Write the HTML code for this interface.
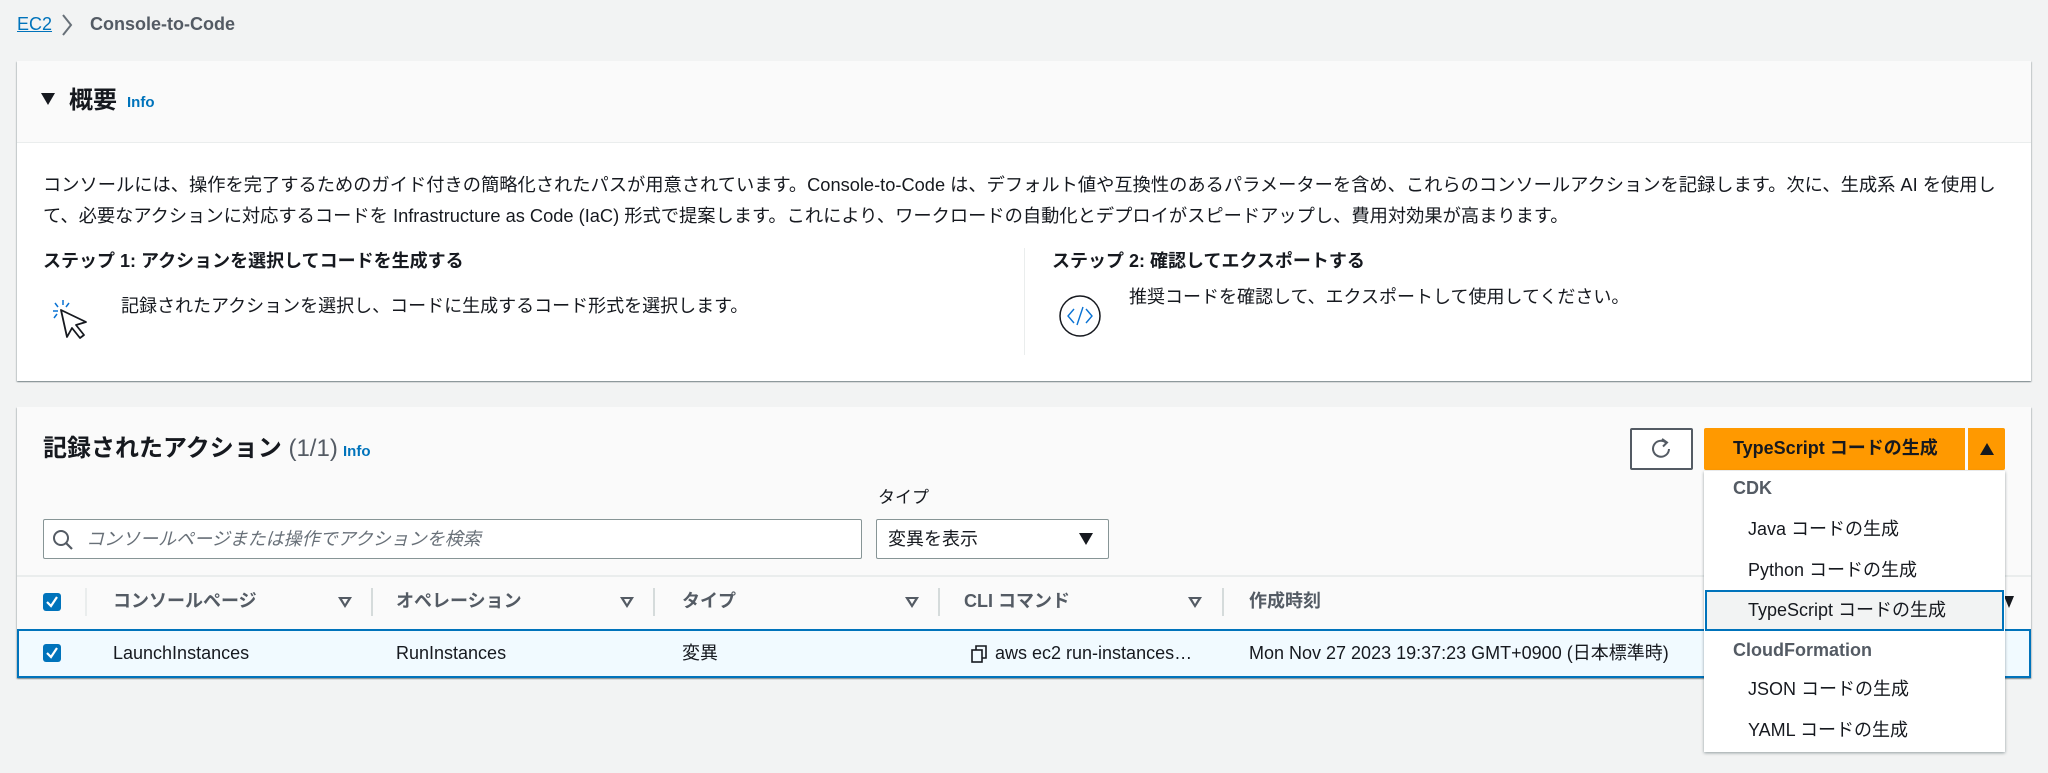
<!DOCTYPE html>
<html><head><meta charset="utf-8"><style>
*{box-sizing:border-box;margin:0;padding:0}
body{width:2048px;height:773px;background:#f2f3f3;font-family:"Liberation Sans","Noto Sans CJK JP",sans-serif;color:#16191f;position:relative;overflow:hidden;font-size:18px}
.a{position:absolute;white-space:nowrap;line-height:1.3}
.panel{position:absolute;background:#fff;box-shadow:0 1px 1px rgba(0,28,36,.3),1px 1px 1px rgba(0,28,36,.15),-1px 1px 1px rgba(0,28,36,.15)}
.info{color:#0073bb;font-weight:bold;font-size:15px}
.b{font-weight:bold}
.sort{position:absolute;width:0;height:0;border-left:7px solid transparent;border-right:7px solid transparent;border-top:11px solid #545b64}
.sort::after{content:"";position:absolute;left:-3px;top:-9px;border-left:3px solid transparent;border-right:3px solid transparent;border-top:5px solid #fafafa}
.sep{position:absolute;width:2px;height:28px;background:#d5dbdb;top:588px}
.cb{position:absolute;width:18px;height:18px;background:#0073bb;border-radius:3px}
.cb svg{position:absolute;left:2px;top:2px}
</style></head><body>
<div class="a" style="left:17px;top:13px;font-size:18px;color:#0073bb;text-decoration:underline">EC2</div>
<svg class="a" style="left:60px;top:13px" width="14" height="24"><path d="M3 2l8 10-8 10" stroke="#687078" stroke-width="2" fill="none"/></svg>
<div class="a b" style="left:90px;top:13px;font-size:18px;color:#545b64">Console-to-Code</div>

<div class="panel" style="left:17px;top:61px;width:2014px;height:320px">
  <div style="position:absolute;left:0;top:0;width:100%;height:82px;background:#fafafa;border-bottom:1px solid #eaeded"></div>
  <svg class="a" style="left:24px;top:32px" width="14" height="12"><path d="M0 0h14L7 12z" fill="#16191f"/></svg>
  <div class="a b" style="left:52px;top:24px;font-size:24px">概要</div>
  <div class="a info" style="left:110px;top:32px">Info</div>
  <div class="a" style="left:26px;top:108px;line-height:31px;font-size:18.25px">コンソールには、操作を完了するためのガイド付きの簡略化されたパスが用意されています。Console-to-Code は、デフォルト値や互換性のあるパラメーターを含め、これらのコンソールアクションを記録します。次に、生成系 AI を使用し<br>て、必要なアクションに対応するコードを Infrastructure as Code (IaC) 形式で提案します。これにより、ワークロードの自動化とデプロイがスピードアップし、費用対効果が高まります。</div>
  <div class="a b" style="left:26px;top:189px">ステップ 1: アクションを選択してコードを生成する</div>
  <svg class="a" style="left:34px;top:237px" width="50" height="45"><g stroke="#0972d3" stroke-width="1.5"><path d="M4 5l3 4M12 2v5M18 5l-3 4M2 13h5M3 20l3-4"/></g><path d="M10 12l6 27 5-9 8 10 4-3-8-10 10-3z" stroke="#16191f" stroke-width="1.8" fill="#fff" stroke-linejoin="round"/></svg>
  <div class="a" style="left:104px;top:234px">記録されたアクションを選択し、コードに生成するコード形式を選択します。</div>
  <div style="position:absolute;left:1007px;top:187px;width:1px;height:107px;background:#eaeded"></div>
  <div class="a b" style="left:1035px;top:189px">ステップ 2: 確認してエクスポートする</div>
  <svg class="a" style="left:1041px;top:233px" width="44" height="44"><circle cx="22" cy="22" r="20" stroke="#16191f" stroke-width="1.5" fill="none"/><path d="M16 15l-6 7 6 7M28 15l6 7-6 7M25 13l-6 18" stroke="#0972d3" stroke-width="1.4" fill="none"/></svg>
  <div class="a" style="left:1112px;top:225px">推奨コードを確認して、エクスポートして使用してください。</div>
</div>

<div class="panel" style="left:17px;top:407px;width:2014px;height:271px;background:#fafafa">
  <div style="position:absolute;left:0;top:168px;width:100%;height:2px;background:#eaeded"></div>
  <div style="position:absolute;left:0;top:222px;width:100%;height:49px;background:#f1faff;border:2px solid #0073bb"></div>
</div>
<div class="a b" style="left:43px;top:433px;font-size:24px">記録されたアクション <span style="font-weight:normal;color:#545b64">(1/1)</span></div>
<div class="a info" style="left:343px;top:442px">Info</div>
<div class="a" style="left:878px;top:487px;font-size:17px">タイプ</div>
<div style="position:absolute;left:43px;top:519px;width:819px;height:40px;background:#fff;border:1px solid #879596;border-radius:2px"></div>
<svg class="a" style="left:52px;top:529px" width="22" height="22"><circle cx="9" cy="9" r="7" stroke="#545b64" stroke-width="2" fill="none"/><path d="M14 14l6 6" stroke="#545b64" stroke-width="2.2"/></svg>
<div class="a" style="left:86px;top:528px;color:#687078;font-style:italic">コンソールページまたは操作でアクションを検索</div>
<div style="position:absolute;left:876px;top:519px;width:233px;height:40px;background:#fff;border:1px solid #879596;border-radius:2px"></div>
<div class="a" style="left:888px;top:528px">変異を表示</div>
<svg class="a" style="left:1079px;top:533px" width="14" height="12"><path d="M0 0h14L7 12z" fill="#16191f"/></svg>

<div style="position:absolute;left:1630px;top:428px;width:63px;height:42px;background:#fff;border:2px solid #545b64;border-radius:2px"></div>
<svg class="a" style="left:1649px;top:437px" width="24" height="24"><path d="M17 5.5A8 8 0 1 0 20 12" stroke="#545b64" stroke-width="2" fill="none"/><path d="M13 2l5 3.5-4 4" stroke="#545b64" stroke-width="2" fill="none"/></svg>
<div style="position:absolute;left:1704px;top:428px;width:261px;height:42px;background:#ff9900;border-radius:2px 0 0 2px"></div>
<div class="a b" style="left:1733px;top:437px;font-size:18px">TypeScript コードの生成</div>
<div style="position:absolute;left:1968px;top:428px;width:37px;height:42px;background:#ff9900;border-radius:0 2px 2px 0"></div>
<svg class="a" style="left:1980px;top:443px" width="14" height="12"><path d="M0 12h14L7 0z" fill="#16191f"/></svg>

<div class="cb" style="left:43px;top:593px"><svg width="14" height="14"><path d="M2 7l4 4 6-9" stroke="#fff" stroke-width="2.2" fill="none"/></svg></div>
<div class="sep" style="left:85px;background:#eaeded"></div>
<div class="a b" style="left:113px;top:590px;color:#545b64">コンソールページ</div>
<div class="sort" style="left:338px;top:597px"></div>
<div class="sep" style="left:371px"></div>
<div class="a b" style="left:396px;top:590px;color:#545b64">オペレーション</div>
<div class="sort" style="left:620px;top:597px"></div>
<div class="sep" style="left:653px"></div>
<div class="a b" style="left:682px;top:590px;color:#545b64">タイプ</div>
<div class="sort" style="left:905px;top:597px"></div>
<div class="sep" style="left:938px"></div>
<div class="a b" style="left:964px;top:590px;color:#545b64">CLI コマンド</div>
<div class="sort" style="left:1188px;top:597px"></div>
<div class="sep" style="left:1222px"></div>
<div class="a b" style="left:1249px;top:590px;color:#545b64">作成時刻</div>

<div class="cb" style="left:43px;top:644px"><svg width="14" height="14"><path d="M2 7l4 4 6-9" stroke="#fff" stroke-width="2.2" fill="none"/></svg></div>
<div class="a" style="left:113px;top:642px">LaunchInstances</div>
<div class="a" style="left:396px;top:642px">RunInstances</div>
<div class="a" style="left:682px;top:642px">変異</div>
<svg class="a" style="left:971px;top:645px" width="16" height="18"><rect x="1" y="5" width="10" height="12" stroke="#16191f" stroke-width="1.6" fill="none"/><path d="M5 5V1h10v12h-4" stroke="#16191f" stroke-width="1.6" fill="none"/></svg>
<div class="a" style="left:995px;top:642px">aws ec2 run-instances…</div>
<div class="a" style="left:1249px;top:642px">Mon Nov 27 2023 19:37:23 GMT+0900 (日本標準時)</div>
<svg class="a" style="left:2004px;top:596px" width="10" height="12"><path d="M0 0h10L5 12z" fill="#16191f"/></svg>

<div style="position:absolute;left:1704px;top:471px;width:301px;height:281px;background:#fff;box-shadow:0 1px 3px rgba(0,28,36,.4)"></div>
<div class="a b" style="left:1733px;top:477px;color:#545b64">CDK</div>
<div class="a" style="left:1748px;top:518px">Java コードの生成</div>
<div class="a" style="left:1748px;top:559px">Python コードの生成</div>
<div style="position:absolute;left:1705px;top:590px;width:299px;height:41px;background:#f2f3f3;border:2px solid #0073bb"></div>
<div class="a" style="left:1748px;top:599px">TypeScript コードの生成</div>
<div class="a b" style="left:1733px;top:639px;color:#545b64">CloudFormation</div>
<div class="a" style="left:1748px;top:678px">JSON コードの生成</div>
<div class="a" style="left:1748px;top:719px">YAML コードの生成</div>
</body></html>
